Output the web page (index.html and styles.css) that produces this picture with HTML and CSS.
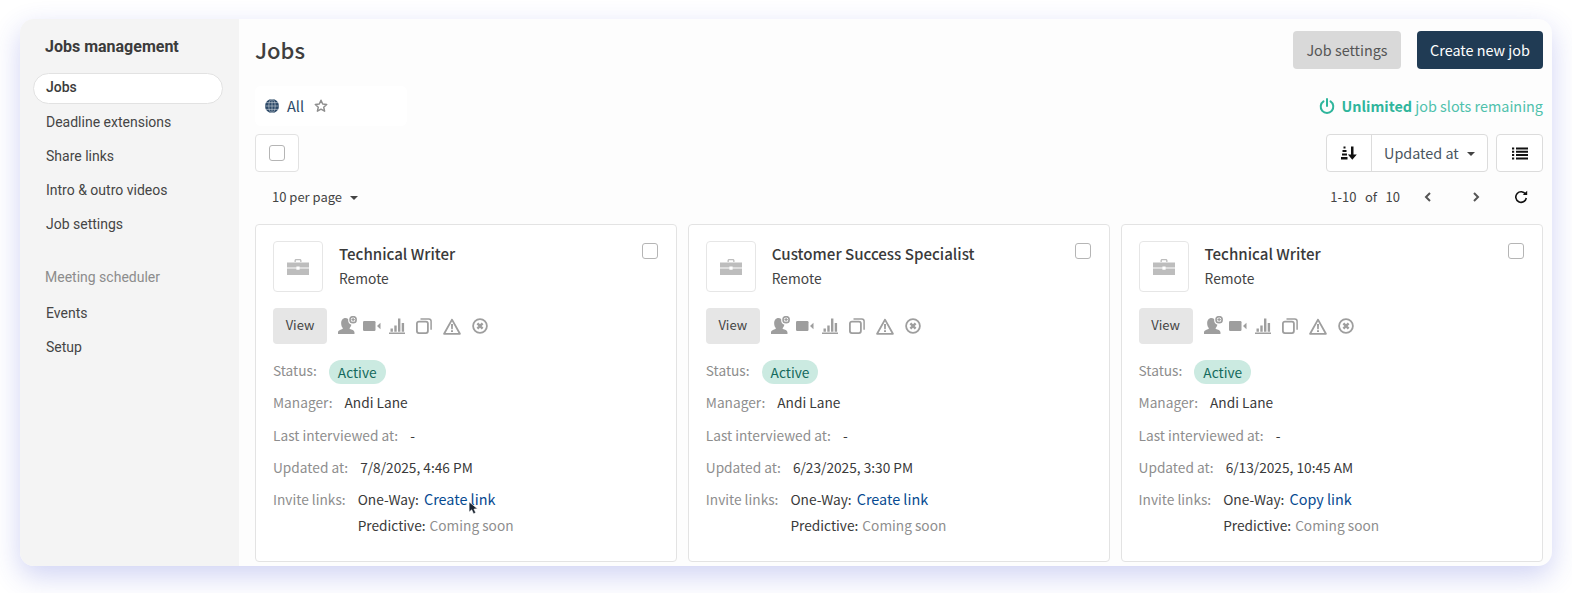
FILE: index.html
```html
<!DOCTYPE html>
<html lang="en">
<head>
<meta charset="utf-8">
<title>Jobs</title>
<link rel="stylesheet" href="styles.css">
</head>
<body>
<svg class="defs" width="0" height="0" aria-hidden="true">
  <symbol id="i-case" viewBox="0 0 22 18"><path d="M7.500 4V2.600C7.500 1.600 8.200 1 9.200 1h3.600c1 0 1.700.6 1.700 1.600V4h-1.300V2.800c0-.3-.2-.5-.5-.5H9.300c-.3 0-.5.2-.5.5V4z"/><path d="M0 4.400h22v5.200H12.600V8.400H9.400v1.200H0z"/><path d="M0 10.600h9.400v1.200h3.200v-1.200H22V17H0z"/></symbol>
  <symbol id="i-person" viewBox="0 0 18 17"><path d="M0 17v-1.800c0-1.600 2.500-2.500 4.300-3 .4-.2.400-.6.1-1C3.400 10 3 8.500 3 6.800c0-3 1.700-5 4-5 1 0 1.900.3 2.600.9-.3 3 1.200 5 3.100 5.500-.3 1.200-.8 2.400-1.600 3.200-.3.400-.2.700.2.900 1.700.5 4.300 1.300 4.300 3V17z"/><circle cx="14.300" cy="3.500" r="2.900" fill="none" stroke="currentColor" stroke-width="1.500"/><path d="M13.700 1.900h1.200v1h1v1.200h-1v1h-1.200v-1h-1V2.900h1z"/></symbol>
  <symbol id="i-video" viewBox="0 0 18 12"><rect x="0" y="1" width="12.500" height="10" rx="1.200"/><path d="M14 6l3.500-3.200v6.400z"/></symbol>
  <symbol id="i-bars" viewBox="0 0 16 16"><path d="M0 14.500h16V16H0zM1.500 10.500h2.400v3.300H1.500zM5.300 7.500h2.400v6.300H5.300zM9 .5h2.400v13.300H9zM12.700 5h2.400v8.800h-2.400z"/></symbol>
  <symbol id="i-copy" viewBox="0 0 16 16"><rect x=".9" y="3.600" width="11" height="11.500" rx="2" fill="none" stroke="currentColor" stroke-width="1.800"/><path d="M4.500 1h8.300c1.200 0 2.300 1 2.300 2.300v8.500" fill="none" stroke="currentColor" stroke-width="1.500"/></symbol>
  <symbol id="i-warn" viewBox="0 0 18 17"><path d="M9 1.600L1.100 15.800h15.800z" fill="none" stroke="currentColor" stroke-width="1.800" stroke-linejoin="round"/><path d="M8 6h2l-.2 5.300H8.200zM8 12.300h2v1.800H8z"/></symbol>
  <symbol id="i-xc" viewBox="0 0 16 16"><circle cx="8" cy="8" r="6.900" fill="none" stroke="currentColor" stroke-width="1.800"/><path d="M5.400 5.400l5.200 5.200m0-5.200l-5.200 5.200" fill="none" stroke="currentColor" stroke-width="2.400"/></symbol>
</svg>

<div class="shell">
  <aside class="side">
    <h2 class="side-title">Jobs management</h2>
    <nav class="side-nav">
      <a class="side-link is-active">Jobs</a>
      <a class="side-link">Deadline extensions</a>
      <a class="side-link">Share links</a>
      <a class="side-link">Intro &amp; outro videos</a>
      <a class="side-link">Job settings</a>
      <span class="side-head">Meeting scheduler</span>
      <a class="side-link">Events</a>
      <a class="side-link">Setup</a>
    </nav>
  </aside>

  <main class="main">
    <header class="top">
      <h1 class="page-title">Jobs</h1>
      <div class="top-actions">
        <button class="btn btn-grey">Job settings</button>
        <button class="btn btn-dark">Create new job</button>
      </div>
    </header>

    <div class="tabs-row">
      <div class="tab">
        <svg class="tab-globe" viewBox="0 0 14 14"><circle cx="7" cy="7" r="7" fill="#2d4a68"/><g fill="none" stroke="#fff" stroke-width=".6" opacity=".75"><ellipse cx="7" cy="7" rx="3.200" ry="7"/><path d="M7 0v14M0 7h14M1 3.600h12M1 10.400h12"/></g></svg>
        <span class="tab-label">All</span>
        <svg class="tab-star" viewBox="0 0 14 14"><path d="M7 1.300l1.700 3.700 4 .5-3 2.700.9 4L7 10.200l-3.600 2 .9-4-3-2.700 4-.5z" fill="none" stroke="#8f8f8f" stroke-width="1.500" stroke-linejoin="round"/></svg>
      </div>
      <div class="slots">
        <svg class="slots-icon" viewBox="0 0 16 16"><path d="M8 1v7" stroke="#2fb59c" stroke-width="2" fill="none" stroke-linecap="round"/><path d="M4.500 3.400a6.300 6.300 0 1 0 7 0" stroke="#2fb59c" stroke-width="2" fill="none" stroke-linecap="round"/></svg>
        <span><b>Unlimited</b> job slots remaining</span>
      </div>
    </div>

    <div class="tools-row">
      <div class="tool-box"><span class="check"></span></div>
      <div class="tools-right">
        <div class="sort-group">
          <span class="sort-dir">
            <svg class="sort-icon" viewBox="0 0 16 14"><path d="M2.500 .5h2v2h-2zM1.500 4h4v2h-4zM1 7.500h5v2H1zM0 11h6.500v2.500H0z" fill="#111"/><path d="M10 .5h2.500V8.500H15.800l-4.500 5.200-4.400-5.200H10z" fill="#111"/></svg>
          </span>
          <span class="sort-field">Updated at<i class="caret"></i></span>
        </div>
        <div class="list-btn">
          <svg class="list-icon" viewBox="0 0 16 13"><path d="M0 .5h2.200v2H0zM4 .5h12v2H4zM0 3.800h2.200v2H0zM4 3.800h12v2H4zM0 7.100h2.200v2H0zM4 7.100h12v2H4zM0 10.400h2.200v2H0zM4 10.400h12v2H4z" fill="#111"/></svg>
        </div>
      </div>
    </div>

    <div class="page-row">
      <span class="per-page">10 per page<i class="caret"></i></span>
      <div class="pager">
        <span class="pager-text">1-10</span><span class="pager-text">of</span><span class="pager-text">10</span>
        <svg class="chev chev-l" viewBox="0 0 8 12"><path d="M6 2L2 6l4 4" fill="none" stroke="#555" stroke-width="2"/></svg>
        <svg class="chev chev-r" viewBox="0 0 8 12"><path d="M2 2l4 4-4 4" fill="none" stroke="#555" stroke-width="2"/></svg>
        <svg class="reload" viewBox="0 0 14 14"><path d="M11.600 4.200A5.300 5.300 0 1 0 12.300 8" fill="none" stroke="#111" stroke-width="1.600"/><path d="M8.800 5h4.400V.8z" fill="#111"/></svg>
      </div>
    </div>

    <section class="cards">
      <article class="card">
        <span class="check card-check"></span>
        <div class="card-head">
          <div class="logo"><svg class="logo-icon"><use href="#i-case"/></svg></div>
          <div><div class="job-title">Technical Writer</div><div class="job-loc">Remote</div></div>
        </div>
        <div class="actions">
          <button class="btn-view">View</button>
          <svg class="ic ic-person"><use href="#i-person"/></svg>
          <svg class="ic ic-video"><use href="#i-video"/></svg>
          <svg class="ic ic-bars"><use href="#i-bars"/></svg>
          <svg class="ic ic-copy"><use href="#i-copy"/></svg>
          <svg class="ic ic-warn"><use href="#i-warn"/></svg>
          <svg class="ic ic-xc"><use href="#i-xc"/></svg>
        </div>
        <div class="row row-status"><span class="lbl">Status:</span><span class="pill">Active</span></div>
        <div class="row"><span class="lbl">Manager:</span><span>Andi Lane</span></div>
        <div class="row"><span class="lbl">Last interviewed at:</span><span>-</span></div>
        <div class="row"><span class="lbl">Updated at:</span><span>7/8/2025, 4:46 PM</span></div>
        <div class="row row-links">
          <span class="lbl">Invite links:</span>
          <div class="links">
            <div class="link-line">One-Way: <a class="lnk">Create link</a>
              <svg class="cursor" viewBox="0 0 12 16"><path d="M1 1l0 11.500 3-2.500 2 4.500 2.500-1-2-4.300 4-.3z" fill="#1d2733" stroke="#fff" stroke-width=".6"/></svg>
            </div>
            <div class="link-line">Predictive: <span class="soon">Coming soon</span></div>
          </div>
        </div>
      </article>

      <article class="card">
        <span class="check card-check"></span>
        <div class="card-head">
          <div class="logo"><svg class="logo-icon"><use href="#i-case"/></svg></div>
          <div><div class="job-title">Customer Success Specialist</div><div class="job-loc">Remote</div></div>
        </div>
        <div class="actions">
          <button class="btn-view">View</button>
          <svg class="ic ic-person"><use href="#i-person"/></svg>
          <svg class="ic ic-video"><use href="#i-video"/></svg>
          <svg class="ic ic-bars"><use href="#i-bars"/></svg>
          <svg class="ic ic-copy"><use href="#i-copy"/></svg>
          <svg class="ic ic-warn"><use href="#i-warn"/></svg>
          <svg class="ic ic-xc"><use href="#i-xc"/></svg>
        </div>
        <div class="row row-status"><span class="lbl">Status:</span><span class="pill">Active</span></div>
        <div class="row"><span class="lbl">Manager:</span><span>Andi Lane</span></div>
        <div class="row"><span class="lbl">Last interviewed at:</span><span>-</span></div>
        <div class="row"><span class="lbl">Updated at:</span><span>6/23/2025, 3:30 PM</span></div>
        <div class="row row-links">
          <span class="lbl">Invite links:</span>
          <div class="links">
            <div class="link-line">One-Way: <a class="lnk">Create link</a></div>
            <div class="link-line">Predictive: <span class="soon">Coming soon</span></div>
          </div>
        </div>
      </article>

      <article class="card">
        <span class="check card-check"></span>
        <div class="card-head">
          <div class="logo"><svg class="logo-icon"><use href="#i-case"/></svg></div>
          <div><div class="job-title">Technical Writer</div><div class="job-loc">Remote</div></div>
        </div>
        <div class="actions">
          <button class="btn-view">View</button>
          <svg class="ic ic-person"><use href="#i-person"/></svg>
          <svg class="ic ic-video"><use href="#i-video"/></svg>
          <svg class="ic ic-bars"><use href="#i-bars"/></svg>
          <svg class="ic ic-copy"><use href="#i-copy"/></svg>
          <svg class="ic ic-warn"><use href="#i-warn"/></svg>
          <svg class="ic ic-xc"><use href="#i-xc"/></svg>
        </div>
        <div class="row row-status"><span class="lbl">Status:</span><span class="pill">Active</span></div>
        <div class="row"><span class="lbl">Manager:</span><span>Andi Lane</span></div>
        <div class="row"><span class="lbl">Last interviewed at:</span><span>-</span></div>
        <div class="row"><span class="lbl">Updated at:</span><span>6/13/2025, 10:45 AM</span></div>
        <div class="row row-links">
          <span class="lbl">Invite links:</span>
          <div class="links">
            <div class="link-line">One-Way: <a class="lnk">Copy link</a></div>
            <div class="link-line">Predictive: <span class="soon">Coming soon</span></div>
          </div>
        </div>
      </article>
    </section>
  </main>
</div>
</body>
</html>
```

FILE: styles.css
```css
* { box-sizing: border-box; }
html, body { margin: 0; height: 100%; overflow: hidden; }
body {
  background: #fff;
  padding: 19px 20px 27px;
  font-family: "Noto Sans CJK JP", "Source Sans Pro", "Noto Sans", sans-serif;
  font-size: 13.700px;
  line-height: 20px;
  color: #3a3a3a;
}
.defs { position: absolute; }
.shell {
  display: flex;
  height: 547px;
  border-radius: 14px;
  overflow: hidden;
  background: #fdfdfd;
  box-shadow: 0 10px 28px rgba(60, 70, 210, .24);
}
.side {
  width: 219px;
  flex: none;
  background: #f4f4f4;
  font-family: Roboto, sans-serif;
  padding: 18px 16px 0 13px;
}
.side-title {
  margin: 0 0 16px 12px;
  font-size: 16px;
  line-height: 20px;
  font-weight: 700;
  color: #3b3b3b;
}
.side-nav { display: flex; flex-direction: column; }
.side-link {
  display: block;
  height: 34px;
  line-height: 34px;
  padding-left: 13px;
  font-size: 14px;
  color: #454545;
}
.side-link.is-active {
  height: 31px;
  line-height: 27px;
  margin-bottom: 1px;
  background: #fff;
  border: 1px solid #e2e2e2;
  border-radius: 16px;
  padding-left: 12px;
  font-weight: 500;
  color: #3b3b3b;
}
.side-head {
  height: 20px;
  line-height: 20px;
  margin: 26px 0 9px;
  padding-left: 12px;
  font-size: 14px;
  color: #8c8c8c;
}
.main { flex: 1; min-width: 0; padding: 12px 9px 0 16px; }
.top { display: flex; justify-content: space-between; align-items: center; height: 38px; }
.page-title { margin: -2px 0 0; font-size: 22px; line-height: 38px; font-weight: 500; color: #3f3f3f; }
.top-actions { display: flex; gap: 16px; }
.btn {
  height: 38px;
  border: 0;
  border-radius: 4px;
  font: inherit;
  font-size: 14.400px;
  padding: 0;
}
.btn-grey { width: 108px; background: #d9d9d9; color: #555; }
.btn-dark { width: 126px; background: #203b54; color: #fff; }
.tabs-row { display: flex; justify-content: space-between; align-items: center; margin-top: 17px; height: 40px; }
.tab {
  width: 152px;
  height: 40px;
  display: flex;
  align-items: center;
  background: #fff;
  border-radius: 6px;
  padding-left: 10px;
}
.tab-globe { width: 14px; height: 14px; }
.tab-label { margin-left: 8px; font-size: 14.600px; color: #2d4a68; }
.tab-star { width: 14px; height: 14px; margin-left: 10px; }
.slots { display: flex; align-items: center; gap: 7px; font-size: 14.400px; color: #4fc1ac; }
.slots b { font-weight: 700; color: #2fb59c; }
.slots-icon { width: 16px; height: 16px; }
.tools-row { display: flex; justify-content: space-between; margin-top: 8px; height: 38px; }
.tool-box {
  width: 44px;
  height: 38px;
  display: flex;
  align-items: center;
  justify-content: center;
  background: #fff;
  border: 1px solid #e2e2e2;
  border-radius: 4px;
}
.check {
  display: block;
  width: 16px;
  height: 16px;
  background: #fff;
  border: 1px solid #b5b5b5;
  border-radius: 3px;
}
.tools-right { display: flex; gap: 8px; }
.sort-group {
  display: flex;
  height: 38px;
  width: 162px;
  background: #fff;
  border: 1px solid #dcdcdc;
  border-radius: 4px;
}
.sort-dir { width: 45px; display: flex; align-items: center; justify-content: center; border-right: 1px solid #dcdcdc; }
.sort-icon { width: 16px; height: 14px; }
.sort-field { flex: 1; display: flex; align-items: center; padding-left: 12px; font-size: 14.400px; color: #4a5560; }
.list-btn {
  width: 47px;
  height: 38px;
  display: flex;
  align-items: center;
  justify-content: center;
  background: #fff;
  border: 1px solid #dcdcdc;
  border-radius: 4px;
}
.list-icon { width: 16px; height: 13px; }
.caret {
  display: block;
  width: 0;
  height: 0;
  margin-left: 8px;
  margin-top: 2px;
  border: 4px solid transparent;
  border-top-color: #444;
  border-bottom: 0;
}
.page-row { display: flex; justify-content: space-between; align-items: center; height: 24px; margin-top: 13px; }
.per-page { display: flex; align-items: center; margin-left: 17px; font-size: 13px; color: #444; }
.pager { display: flex; align-items: center; font-size: 13px; color: #444; }
.pager-text { margin-right: 8.500px; }
.chev { width: 8px; height: 12px; }
.chev-l { margin-left: 15.500px; }
.chev-r { margin-left: 40px; }
.reload { width: 14px; height: 14px; margin-left: 34px; margin-right: 15px; }
.cards { display: grid; grid-template-columns: repeat(3, 1fr); gap: 10.300px; margin-top: 15px; }
.card {
  position: relative;
  height: 338px;
  background: #fff;
  border: 1px solid #e3e3e3;
  border-radius: 4px;
  padding: 16px 17px 0;
}
.card-check { position: absolute; top: 18px; right: 18px; }
.card-head { display: flex; gap: 16px; }
.logo {
  width: 50px;
  height: 51px;
  display: flex;
  align-items: center;
  justify-content: center;
  border: 1px solid #e6e6e6;
  border-radius: 4px;
}
.logo-icon { width: 22px; height: 18px; fill: #bdbdbd; color: #bdbdbd; }
.job-title { font-size: 15.100px; line-height: 24px; font-weight: 500; color: #3a3a3a; }
.job-loc { font-size: 13.800px; line-height: 24px; margin-top: 1px; color: #444; }
.actions { display: flex; align-items: center; margin-top: 16px; height: 36px; }
.btn-view {
  width: 54px;
  height: 36px;
  border: 0;
  border-radius: 4px;
  background: #e6e6e6;
  font: inherit;
  font-size: 13px;
  color: #444;
  padding: 0 0 2px;
  margin-right: 11px;
}
.ic { fill: #9e9e9e; color: #9e9e9e; flex: none; }
.ic-person { width: 19px; height: 18px; margin-top: -3px; }
.ic-video { width: 18px; height: 12px; margin-left: 6px; }
.ic-bars { width: 16px; height: 16px; margin-left: 8px; }
.ic-copy { width: 16px; height: 16px; margin-left: 11px; }
.ic-warn { width: 18px; height: 17px; margin-left: 11px; }
.ic-xc { width: 16px; height: 16px; margin-left: 11px; }
.row { display: flex; gap: 12px; height: 20px; margin-top: 12.250px; align-items: center; }
.row-status { height: 24px; margin-top: 14px; margin-bottom: -2px; }
.lbl { color: #8e8e8e; flex: none; }
.pill {
  height: 24px;
  line-height: 24px;
  padding: 0 9px;
  border-radius: 12px;
  background: #cbeae1;
  color: #14695c;
  margin-top: 3px;
}
.row-links { align-items: flex-start; height: 46px; }
.links { display: flex; flex-direction: column; gap: 6px; }
.link-line { position: relative; height: 20px; white-space: nowrap; }
.lnk { color: #064a91; margin-left: 2px; font-size: 14.400px; }
.soon { color: #8e8e8e; margin-left: 1px; }
.cursor { position: absolute; left: 110px; top: 12px; width: 11px; height: 14px; }
```
